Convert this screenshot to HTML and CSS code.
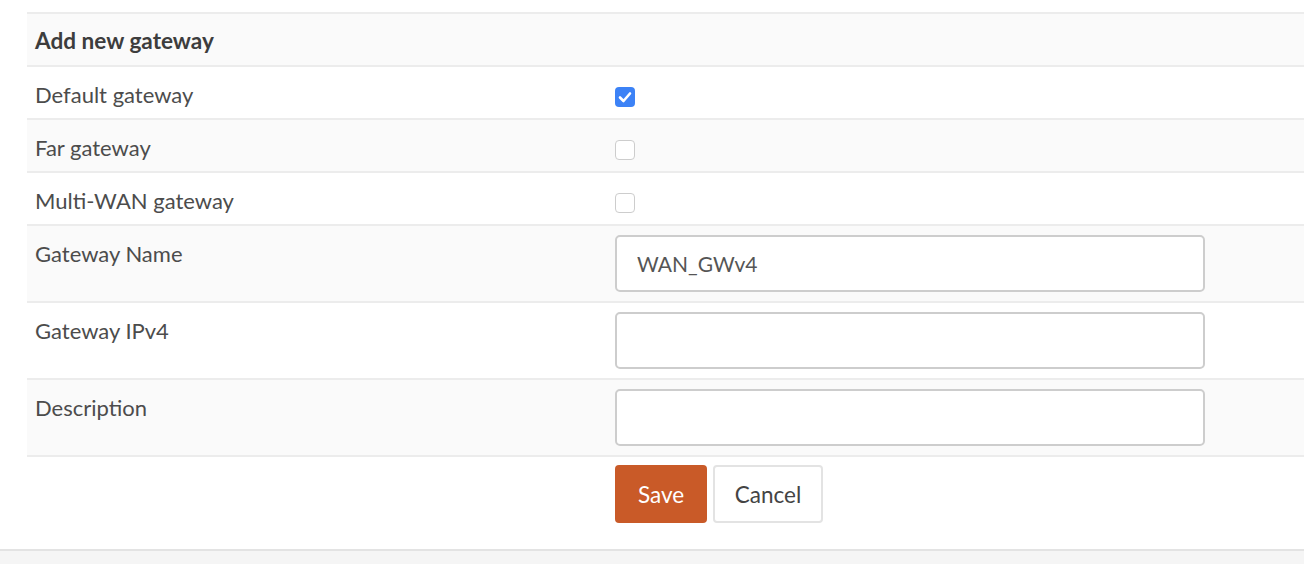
FILE: index.html
```html
<!DOCTYPE html>
<html>
<head>
<meta charset="utf-8">
<link rel="stylesheet" href="styles.css">
</head>
<body>
<div class="page">
  <div class="panel">
    <div class="row head"><div class="label">Add new gateway</div></div>
    <div class="row small">
      <div class="label">Default gateway</div>
      <div class="field"><span class="cb checked"><svg viewBox="0 0 20 20" width="20" height="20"><path d="M5 10.5 L8.5 14 L15 6.5" fill="none" stroke="#fff" stroke-width="2.6" stroke-linecap="round" stroke-linejoin="round"/></svg></span></div>
    </div>
    <div class="row small alt">
      <div class="label">Far gateway</div>
      <div class="field"><span class="cb"></span></div>
    </div>
    <div class="row small">
      <div class="label">Multi-WAN gateway</div>
      <div class="field"><span class="cb"></span></div>
    </div>
    <div class="row tall alt">
      <div class="label">Gateway Name</div>
      <div class="field"><input class="text" type="text" value="WAN_GWv4"></div>
    </div>
    <div class="row tall">
      <div class="label">Gateway IPv4</div>
      <div class="field"><input class="text" type="text" value=""></div>
    </div>
    <div class="row tall alt">
      <div class="label">Description</div>
      <div class="field"><input class="text" type="text" value=""></div>
    </div>
    <div class="row actions">
      <div class="label"></div>
      <div class="field buttons"><button class="btn save">Save</button><button class="btn cancel">Cancel</button></div>
    </div>
  </div>
  <div class="footer"></div>
</div>
</body>
</html>
```

FILE: styles.css
```css
html, body {
  margin: 0;
  padding: 0;
  background: #fff;
}
body {
  font-family: Lato, "Liberation Sans", sans-serif;
  font-size: 22px;
  color: #4c4c4c;
}
.page {
  padding-top: 12px;
}
.panel {
  margin-left: 27px;
  border-top: 2px solid #ececec;
}
.row {
  display: grid;
  grid-template-columns: 588px 590px;
  box-sizing: border-box;
  border-bottom: 2px solid #ececec;
  background: #fff;
}
.row.alt, .row.head {
  background: #fafafa;
}
.row.head {
  height: 53px;
}
.row.small {
  height: 53px;
}
.row.tall {
  height: 77px;
}
.row.actions {
  height: 92px;
  border-bottom: none;
}
.label {
  padding: 12px 8px 0 8px;
  line-height: 32px;
}
.head .label {
  padding-top: 11px;
  font-size: 22.6px;
  font-weight: bold;
  color: #3d3d3d;
}
.field {
  padding-top: 9px;
}
.small .field {
  padding-top: 20px;
}
.cb {
  display: block;
  box-sizing: border-box;
  width: 20px;
  height: 20px;
  border-radius: 4px;
  border: 1.5px solid #cdcdcd;
  background: #fff;
}
.cb.checked {
  border: none;
  background: #3c82f6;
}
.cb svg {
  display: block;
}
.text {
  display: block;
  box-sizing: border-box;
  width: 590px;
  height: 57px;
  margin: 0;
  border: 2px solid #cdcdcd;
  border-radius: 5px;
  background: #fff;
  padding: 0 0 0 20px;
  font-family: Lato, "Liberation Sans", sans-serif;
  font-size: 21px;
  color: #555;
  outline: none;
}
.buttons {
  display: flex;
  gap: 6px;
  padding-top: 8px;
  align-items: flex-start;
}
.btn {
  box-sizing: border-box;
  height: 58px;
  margin: 0;
  border-radius: 4px;
  font-family: Lato, "Liberation Sans", sans-serif;
  font-size: 22.5px;
  cursor: pointer;
}
.save {
  width: 92px;
  background: #c95a28;
  border: none;
  color: #fff;
}
.cancel {
  width: 110px;
  background: #fff;
  border: 2px solid #e3e3e3;
  color: #444;
}
.footer {
  height: 13px;
  border-top: 2px solid #e3e3e3;
  background: #f5f5f5;
}
```
